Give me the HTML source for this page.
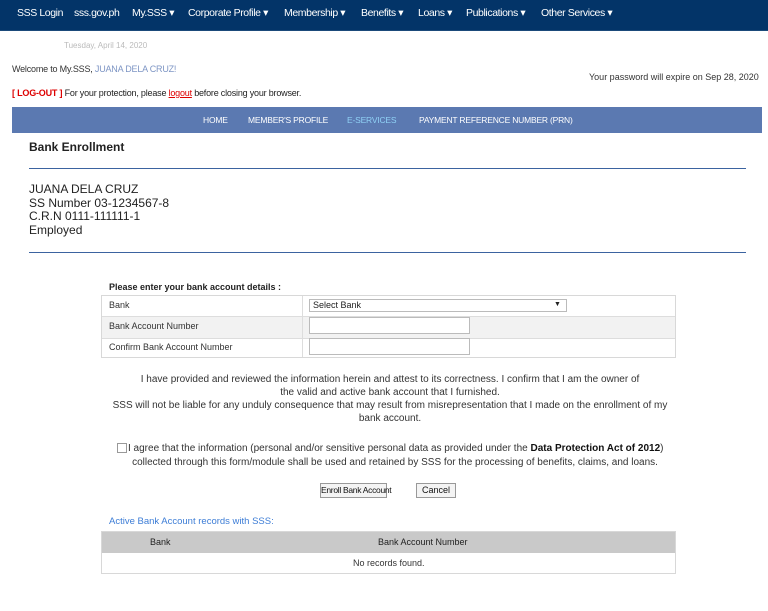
<!DOCTYPE html><html><head><style>
body{margin:0;width:768px;height:611px;background:#fff;font-family:"Liberation Sans",sans-serif;position:relative;overflow:hidden;color:#111}
.a{position:absolute;white-space:nowrap}
.top{position:absolute;left:0;top:0;width:768px;height:30px;background:#033468;border-bottom:1px solid #1b4a7a}
.top span{position:absolute;top:7px;color:#fff;font-size:10.5px;letter-spacing:-0.4px}
.menu{position:absolute;left:12px;top:107px;width:750px;height:26px;background:#5b79b1}
.menu span{position:absolute;top:8px;color:#fff;font-size:8.5px;letter-spacing:-0.2px}
.hr{position:absolute;left:29px;width:717px;height:1px;background:#3b63a0}
.t{position:absolute;left:101px;width:573px;border:1px solid #d8d8d8;font-size:9px;color:#333}
.inp{position:absolute;background:#fff;border:1px solid #bbb}
</style></head><body>
<div class="top">
<span style="left:17px">SSS Login</span><span style="left:74px">sss.gov.ph</span><span style="left:132px">My.SSS ▾</span><span style="left:188px">Corporate Profile ▾</span><span style="left:284px">Membership ▾</span><span style="left:361px">Benefits ▾</span><span style="left:418px">Loans ▾</span><span style="left:466px">Publications ▾</span><span style="left:541px">Other Services ▾</span>
</div>
<div class="a" style="left:64px;top:41px;font-size:8px;color:#bbb">Tuesday, April 14, 2020</div>
<div class="a" style="left:12px;top:64px;font-size:9px;color:#333;letter-spacing:-0.2px">Welcome to My.SSS, <span style="color:#7d95c4">JUANA DELA CRUZ!</span></div>
<div class="a" style="left:589px;top:72px;font-size:9px;color:#333">Your password will expire on Sep 28, 2020</div>
<div class="a" style="left:12px;top:88px;font-size:9px;color:#222;letter-spacing:-0.2px"><b style="color:#d00">[ LOG-OUT ]</b> For your protection, please <u style="color:#d00">logout</u> before closing your browser.</div>
<div class="menu"><span style="left:191px">HOME</span><span style="left:236px">MEMBER'S PROFILE</span><span style="left:335px;color:#8fd0f5">E-SERVICES</span><span style="left:407px">PAYMENT REFERENCE NUMBER (PRN)</span></div>
<div class="a" style="left:29px;top:140px;font-size:12px;font-weight:bold;color:#222">Bank Enrollment</div>
<div class="hr" style="top:168px"></div>
<div class="a" style="left:29px;top:183px;font-size:12px;line-height:13.5px;color:#222">JUANA DELA CRUZ<br>SS Number 03-1234567-8<br>C.R.N 0111-111111-1<br>Employed</div>
<div class="hr" style="top:252px"></div>
<div class="a" style="left:109px;top:282px;font-size:9px;font-weight:bold;color:#222">Please enter your bank account details :</div>
<div class="t" style="top:295px;height:61px">
<div style="position:absolute;top:0;left:0;right:0;height:20px"><span class="a" style="left:7px;top:4px">Bank</span></div>
<div style="position:absolute;top:20px;left:0;right:0;height:21px;background:#f2f2f2;border-top:1px solid #ddd;border-bottom:1px solid #ddd"><span class="a" style="left:7px;top:4px">Bank Account Number</span></div>
<div style="position:absolute;top:42px;left:0;right:0"><span class="a" style="left:7px;top:4px">Confirm Bank Account Number</span></div>
<div style="position:absolute;left:200px;top:0;bottom:0;width:1px;background:#ddd"></div>
</div>
<div class="inp" style="left:309px;top:299px;width:256px;height:11px;font-size:9px;color:#222"><span class="a" style="left:3px;top:0">Select Bank</span><span class="a" style="left:244px;top:1px;font-size:7px">▼</span></div>
<div class="inp" style="left:309px;top:317px;width:159px;height:15px"></div>
<div class="inp" style="left:309px;top:338px;width:159px;height:15px"></div>
<div class="a" style="left:90px;top:373px;width:600px;text-align:center;font-size:10px;line-height:13px;color:#333;white-space:normal">I have provided and reviewed the information herein and attest to its correctness. I confirm that I am the owner of<br>the valid and active bank account that I furnished.<br>SSS will not be liable for any unduly consequence that may result from misrepresentation that I made on the enrollment of my<br>bank account.</div>
<div class="a" style="left:117px;top:443px;width:8px;height:8px;border:1px solid #999;background:#fff"></div>
<div class="a" style="left:128px;top:442px;width:534px;text-align:center;font-size:10px;line-height:14px;color:#333">I agree that the information (personal and/or sensitive personal data as provided under the <b style="color:#111">Data Protection Act of 2012</b>)<br>collected through this form/module shall be used and retained by SSS for the processing of benefits, claims, and loans.</div>
<div class="a" style="left:320px;top:483px;width:65px;height:13px;border:1px solid #999;background:#f4f4f4;font-size:8.5px;text-align:center;line-height:13px;letter-spacing:-0.3px">Enroll Bank Account</div>
<div class="a" style="left:416px;top:483px;width:38px;height:13px;border:1px solid #999;background:#f4f4f4;font-size:9px;text-align:center;line-height:13px">Cancel</div>
<div class="a" style="left:109px;top:516px;font-size:9.5px;color:#3d7dd6">Active Bank Account records with SSS:</div>
<div class="t" style="top:531px;height:41px">
<div style="position:absolute;top:0;left:0;right:0;height:21px;background:#c9c9c9"><span class="a" style="left:48px;top:5px;color:#222">Bank</span><span class="a" style="left:276px;top:5px;color:#222">Bank Account Number</span></div>
<span class="a" style="left:251px;top:26px">No records found.</span>
</div>
</body></html>
